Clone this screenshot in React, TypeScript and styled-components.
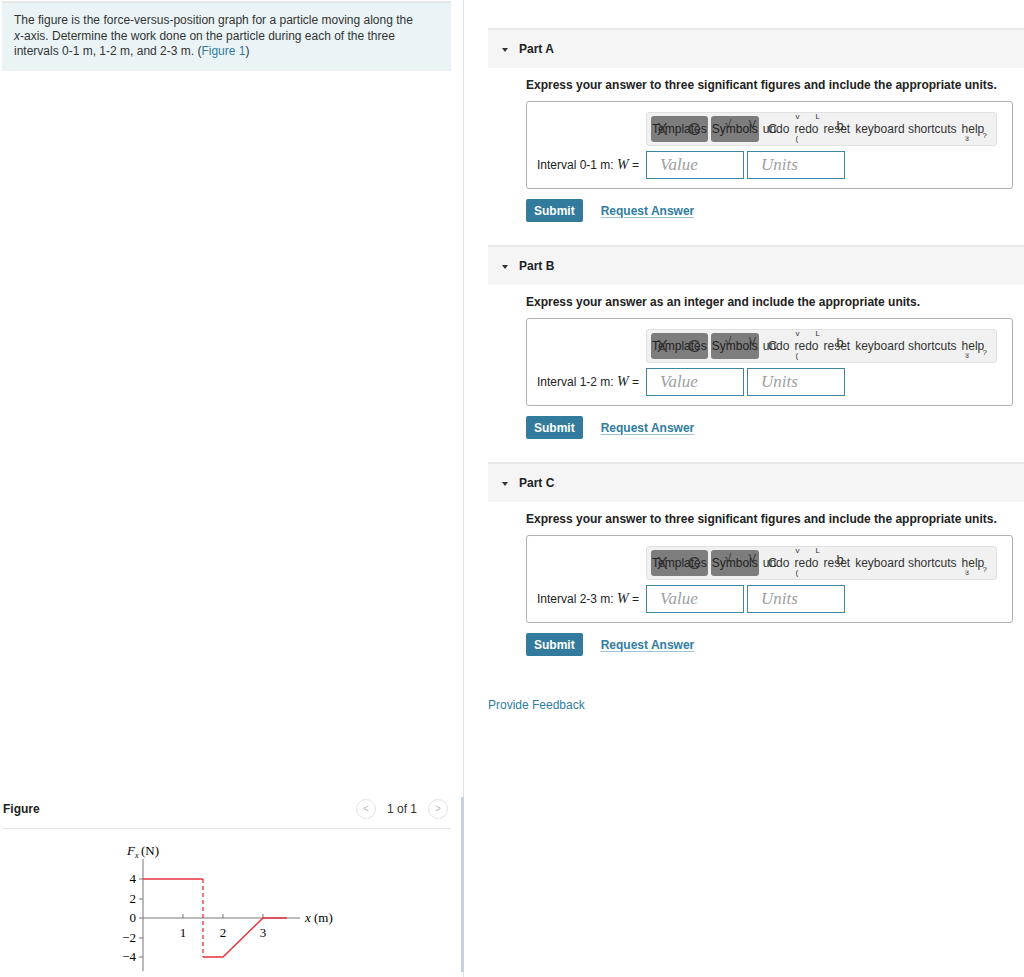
import styled, { createGlobalStyle } from 'styled-components'

const GlobalStyle = createGlobalStyle`
    html, body {
        margin: 0;
        padding: 0;
        background: #ffffff;
    }
    body {
        font-family: 'Liberation Sans', Arial, sans-serif;
        font-size: 12px;
        color: #222;
    }
`

const Page = styled.div`
    display: flex;
    width: 1024px;
    height: 977px;
    overflow: hidden;
`

const LeftPane = styled.div`
    position: relative;
    display: flex;
    flex-direction: column;
    flex: 0 0 464px;
    padding: 1px 12px 0 2px;
    box-sizing: border-box;
    border-right: 1px solid #dfe3e8;
`

const ScrollThumb = styled.div`
    position: absolute;
    right: -1px;
    top: 797px;
    width: 3px;
    height: 175px;
    background: #c5d2e0;
`

const ProblemBox = styled.div`
    border-top: 2px solid #e6e6e6;
    background: #eaf4f7;
    padding: 10px 12px 11px 12px;
    line-height: 15.5px;
    font-size: 12px;
    color: #333;
`

const NoWrap = styled.span`
    white-space: nowrap;
`

const Link = styled.a`
    color: #2f7da1;
    text-decoration: none;
`

const FigureSection = styled.div`
    margin-top: auto;
    display: flex;
    flex-direction: column;
`

const FigureHeader = styled.div`
    display: flex;
    align-items: center;
    justify-content: space-between;
    padding: 0 3px 7px 1px;
    height: 25px;
    border-bottom: 1px solid #e2e2e2;
`

const FigureTitle = styled.span`
    font-weight: bold;
    font-size: 12px;
    color: #222;
`

const Pager = styled.div`
    display: flex;
    align-items: center;
    gap: 11px;
    font-size: 12px;
    color: #333;
`

const PagerButton = styled.span`
    display: inline-flex;
    align-items: center;
    justify-content: center;
    width: 20px;
    height: 20px;
    border-radius: 50%;
    border: 1px solid #e4e4e4;
    color: #bbb;
    font-size: 10px;
    box-sizing: border-box;
`

const GraphWrap = styled.div`
    padding: 8px 0 0 98px;
    height: 140px;
`

const RightPane = styled.div`
    flex: 1;
    min-width: 0;
    padding: 28px 0 0 24px;
`

const PartHeader = styled.div`
    display: flex;
    align-items: center;
    gap: 11px;
    height: 38px;
    padding-left: 14px;
    background: #f5f5f5;
    border-top: 2px solid #e8e8e8;
    font-weight: bold;
    font-size: 12px;
    color: #222;
`

const Caret = styled.span`
    width: 0;
    height: 0;
    border-left: 3.5px solid transparent;
    border-right: 3.5px solid transparent;
    border-top: 4px solid #333;
    margin-top: 2px;
`

const PartBody = styled.div`
    padding: 10px 11px 23px 38px;
`

const Instruction = styled.div`
    font-weight: bold;
    font-size: 12px;
    line-height: 14px;
    color: #222;
    margin-bottom: 9px;
`

const AnswerBox = styled.div`
    display: grid;
    grid-template-columns: auto minmax(0, 1fr);
    column-gap: 7px;
    row-gap: 5px;
    align-items: center;
    padding: 10px 15px 9px 10px;
    border: 1px solid #b0b0b0;
    border-radius: 3px;
`

const Toolbar = styled.div`
    grid-column: 2;
    display: flex;
    align-items: center;
    gap: 3px;
    height: 32px;
    padding: 0 4px;
    background: #f1f1f1;
    border: 1px solid #e0e0e0;
    border-radius: 3px;
    font-size: 12px;
    color: #333;
    white-space: nowrap;
    overflow: hidden;
`

const ToolButton = styled.span`
    position: relative;
    display: inline-flex;
    align-items: center;
    height: 26px;
    padding: 0 1px;
    background: #7d7d7d;
    border-radius: 3px;
    color: #222;
`

const ToolWord = styled.span`
    position: relative;
    padding: 0 1px;
`

const Glyph = styled.span<{ left: number; top: number; size?: number }>`
    position: absolute;
    left: ${(p) => p.left}px;
    top: ${(p) => p.top}px;
    font-size: ${(p) => p.size ?? 14}px;
    line-height: 1;
    color: #333;
    pointer-events: none;
`

const Label = styled.span`
    font-size: 12px;
    color: #222;
    white-space: nowrap;
`

const MathVar = styled.i`
    font-family: 'Liberation Serif', 'Times New Roman', serif;
    font-size: 14px;
`

const Inputs = styled.div`
    display: flex;
    gap: 3px;
`

const Field = styled.div`
    width: 98px;
    height: 28px;
    box-sizing: border-box;
    border: 1px solid #3d86a6;
    padding-left: 13px;
    display: flex;
    align-items: center;
    font-family: 'Liberation Serif', 'Times New Roman', serif;
    font-style: italic;
    font-size: 17px;
    color: #a0a0a0;
`

const Actions = styled.div`
    display: flex;
    align-items: center;
    gap: 18px;
    height: 23px;
    margin-top: 10px;
`

const SubmitButton = styled.button`
    height: 23px;
    padding: 0 8px;
    border: none;
    border-radius: 2px;
    background: #337b9c;
    color: #fff;
    font-family: 'Liberation Sans', Arial, sans-serif;
    font-weight: bold;
    font-size: 12px;
`

const RequestLink = styled.a`
    font-weight: bold;
    font-size: 12px;
    color: #2f7da1;
    text-decoration: underline;
    text-decoration-color: #9cc3d6;
    text-underline-offset: 2px;
`

const Feedback = styled.a`
    display: block;
    margin-top: 19px;
    line-height: 14px;
    font-size: 12px;
    color: #2f7da1;
`

const parts = [
    {
        name: 'Part A',
        text: 'Express your answer to three significant figures and include the appropriate units.',
        interval: '0-1',
    },
    {
        name: 'Part B',
        text: 'Express your answer as an integer and include the appropriate units.',
        interval: '1-2',
    },
    {
        name: 'Part C',
        text: 'Express your answer to three significant figures and include the appropriate units.',
        interval: '2-3',
    },
]

const Graph = () => (
    <svg width="250" height="139" viewBox="0 0 250 139" fontFamily="'Liberation Serif', 'Times New Roman', serif" fontSize="13">
        <text x="27" y="18" fontStyle="italic">F</text>
        <text x="35" y="21" fontStyle="italic" fontSize="8">x</text>
        <text x="41" y="18">(N)</text>
        <line x1="43" y1="22" x2="43" y2="134" stroke="#777" strokeWidth="1" />
        <line x1="43" y1="81" x2="200" y2="81" stroke="#777" strokeWidth="1" />
        {[42, 62, 81, 101, 120].map((y, i) => (
            <g key={y}>
                <line x1="39" y1={y} x2="43" y2={y} stroke="#777" />
                <text x="36" y={y + 4} textAnchor="end">
                    {['4', '2', '0', '\u22122', '\u22124'][i]}
                </text>
            </g>
        ))}
        {[83, 123, 163].map((x, i) => (
            <g key={x}>
                <line x1={x} y1="77" x2={x} y2="81" stroke="#777" />
                <text x={x} y="100" textAnchor="middle">{i + 1}</text>
            </g>
        ))}
        <text x="205" y="85" fontStyle="italic">x</text>
        <text x="214" y="85">(m)</text>
        <polyline points="43,42 103,42" fill="none" stroke="#e8323c" strokeWidth="1.5" />
        <line x1="103" y1="42" x2="103" y2="120" stroke="#e8323c" strokeWidth="1.3" strokeDasharray="4 3" />
        <polyline points="103,120 123,120 163,81 187,81" fill="none" stroke="#e8323c" strokeWidth="1.5" />
    </svg>
)

const MathToolbar = () => (
    <Toolbar>
        <ToolButton>
            Templates
            <Glyph left={6} top={6} size={16}>X</Glyph>
            <Glyph left={37} top={6} size={16}>G</Glyph>
        </ToolButton>
        <ToolButton>
            Symbols
            <Glyph left={14} top={2} size={12}>√</Glyph>
            <Glyph left={38} top={3} size={11}>V</Glyph>
        </ToolButton>
        <ToolWord>
            undo
            <Glyph left={6} top={0} size={13}>C</Glyph>
        </ToolWord>
        <ToolWord>
            redo
            <Glyph left={2} top={-9} size={8}>v</Glyph>
            <Glyph left={22} top={-9} size={8}>L</Glyph>
            <Glyph left={2} top={13} size={8}>(</Glyph>
        </ToolWord>
        <ToolWord>
            reset
            <Glyph left={14} top={-3} size={13}>b</Glyph>
        </ToolWord>
        <ToolWord>keyboard shortcuts</ToolWord>
        <ToolWord>
            help
            <Glyph left={4} top={13} size={7}>उ</Glyph>
            <Glyph left={22} top={10} size={8}>?</Glyph>
        </ToolWord>
    </Toolbar>
)

const App = () => {
    return (
        <Page>
            <GlobalStyle />
            <LeftPane>
                <ProblemBox>
                    The figure is the force-versus-position graph for a particle moving along the{' '}
                    <NoWrap>
                        <i>x</i>-axis.
                    </NoWrap>{' '}
                    Determine the work done on the particle during each of the three intervals 0-1 m,
                    1-2 m, and 2-3 m. (<Link>Figure 1</Link>)
                </ProblemBox>
                <FigureSection>
                    <FigureHeader>
                        <FigureTitle>Figure</FigureTitle>
                        <Pager>
                            <PagerButton>&lt;</PagerButton>
                            <span>1 of 1</span>
                            <PagerButton>&gt;</PagerButton>
                        </Pager>
                    </FigureHeader>
                    <GraphWrap>
                        <Graph />
                    </GraphWrap>
                </FigureSection>
                <ScrollThumb />
            </LeftPane>
            <RightPane>
                {parts.map((part) => (
                    <div key={part.name}>
                        <PartHeader>
                            <Caret />
                            {part.name}
                        </PartHeader>
                        <PartBody>
                            <Instruction>{part.text}</Instruction>
                            <AnswerBox>
                                <MathToolbar />
                                <Label>
                                    Interval {part.interval} m: <MathVar>W</MathVar>&nbsp;=
                                </Label>
                                <Inputs>
                                    <Field>Value</Field>
                                    <Field>Units</Field>
                                </Inputs>
                            </AnswerBox>
                            <Actions>
                                <SubmitButton>Submit</SubmitButton>
                                <RequestLink>Request Answer</RequestLink>
                            </Actions>
                        </PartBody>
                    </div>
                ))}
                <Feedback>Provide Feedback</Feedback>
            </RightPane>
        </Page>
    )
}

export default App
